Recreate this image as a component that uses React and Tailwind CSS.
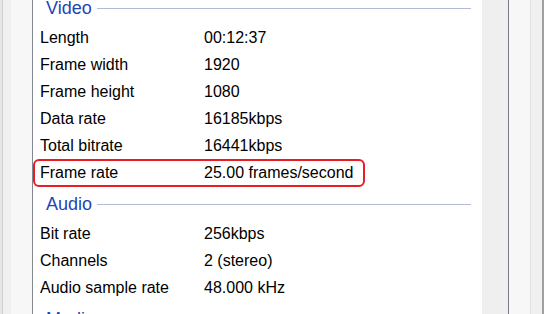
import React from 'react';

const sections = [
  {
    title: 'Video',
    rows: [
      ['Length', '00:12:37'],
      ['Frame width', '1920'],
      ['Frame height', '1080'],
      ['Data rate', '16185kbps'],
      ['Total bitrate', '16441kbps'],
      ['Frame rate', '25.00 frames/second', true],
    ],
  },
  {
    title: 'Audio',
    rows: [
      ['Bit rate', '256kbps'],
      ['Channels', '2 (stereo)'],
      ['Audio sample rate', '48.000 kHz'],
    ],
  },
  {
    title: 'Media',
    rows: [
      ['Contributing artists', ''],
      ['Year', ''],
    ],
  },
];

const Row = ({ label, value, marked }) => (
  <div className="relative grid grid-cols-[164px_1fr] h-[27px] items-center pl-[7px] leading-[27px]">
    <span>{label}</span>
    <span>{value}</span>
    {marked && (
      <span className="absolute left-0 top-0 w-[332px] h-[28px] border-2 border-[#ea1c24] rounded-[6px]" />
    )}
  </div>
);

const App = () => {
  return (
    <div
      className="flex h-[314px] w-[544px] overflow-hidden bg-white text-black text-[16px]"
      style={{ fontFamily: '"Liberation Sans", Arial, sans-serif' }}
    >
      {/* left window edge */}
      <div className="flex w-[33px] shrink-0 border-r border-[#828790]">
        <div className="w-[2px] bg-[#e6e6e6]" />
        <div className="w-[1px] bg-[#cfcfcf]" />
        <div className="w-[8px] bg-[#f0f0f0]" />
        <div className="flex-1 bg-[#f7f7f7]" />
      </div>

      {/* details list */}
      <div className="flex-1 bg-white pr-[11px]">
        <div className="-mt-[10px]">
          {sections.map((s) => (
            <div key={s.title}>
              <div className="flex h-[34px] items-center pt-[8px] pb-[6px] pl-[13px]">
                <span className="text-[18px] leading-[20px] text-[#1f45b3]">{s.title}</span>
                <div className="ml-[5px] h-px flex-1 bg-[#b4bad6]" />
              </div>
              {s.rows.map(([l, v, m]) => (
                <Row key={l} label={l} value={v} marked={m} />
              ))}
            </div>
          ))}
        </div>
      </div>

      {/* right scroll / window edge */}
      <div className="flex w-[62px] shrink-0">
        <div className="w-[26px] bg-[#efefef]" />
        <div className="w-[1px] bg-[#7a7a85]" />
        <div className="w-[21px] bg-[#f7f7f7]" />
        <div className="w-[1px] bg-[#e2e2e2]" />
        <div className="w-[11px] bg-[#f0f0f0]" />
        <div className="w-[2px] bg-[#a0a0a0]" />
      </div>
    </div>
  );
};

export default App;
